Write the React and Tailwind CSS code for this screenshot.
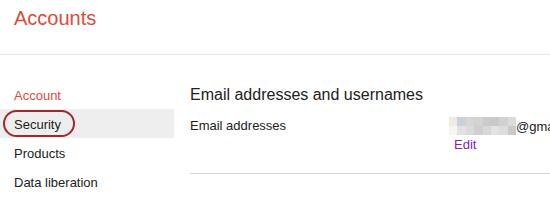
const navItems = ['Account', 'Security', 'Products', 'Data liberation'];

const blurTop = ['#f3ebe3', '#c9d1da', '#d6d6d6', '#d3d3d3', '#cccacb', '#c9c8cb', '#d1d0d3', '#dcdcdc'];
const blurBottom = ['#f8f4ef', '#e2e2e2', '#dadada', '#cfcfcf', '#d8d8d8', '#e4e4e4', '#dedcde', '#cac8cb'];

const App = () => {
  return (
    <div className="w-[550px] h-[200px] overflow-hidden bg-white font-['Liberation_Sans',Arial,sans-serif] text-[#222]">
      {/* Header */}
      <div className="h-[55px] border-b border-[#e5e5e5] pl-[14px] pt-[7px]">
        <h1 className="text-[20px] leading-[23px] text-[#dd4b39]">Accounts</h1>
      </div>

      <div className="flex">
        {/* Sidebar */}
        <div className="w-[174px] shrink-0 pt-[25px]">
          {navItems.map((item) => (
            <div
              key={item}
              className={`relative h-[29px] pl-[14px] pt-[1px] text-[13px] leading-[29px] ${
                item === 'Security' ? 'bg-[#eeeeee] text-[#222]' : item === 'Account' ? 'text-[#dd4b39]' : 'text-[#222]'
              }`}
            >
              {item}
              {item === 'Security' && (
                <span className="absolute left-[3px] top-[1px] w-[72px] h-[27px] rounded-full border-2 border-[#a3262a]" />
              )}
            </div>
          ))}
        </div>

        {/* Main */}
        <div className="flex-1 pl-[16px] pt-[30px]">
          <h2 className="text-[16px] leading-[20px] text-[#222]">Email addresses and usernames</h2>
          <div className="flex mt-[13px] text-[13px] leading-[15px]">
            <div className="w-[259px] shrink-0">Email addresses</div>
            <div className="flex flex-col">
              <div className="flex items-center whitespace-nowrap">
                <div className="grid grid-cols-8 w-[67px] h-[18px] -my-[1px]">
                  {blurTop.map((c, i) => (
                    <div key={`t${i}`} style={{ backgroundColor: c }} />
                  ))}
                  {blurBottom.map((c, i) => (
                    <div key={`b${i}`} style={{ backgroundColor: c }} />
                  ))}
                </div>
                <span>@gmail.com</span>
              </div>
              <a href="#" className="mt-[3px] ml-[5px] text-[#7b1fc8]">Edit</a>
            </div>
          </div>
          <div className="mt-[21px] border-t border-[#d4d4d4]" />
        </div>
      </div>
    </div>
  );
};

export default App;
